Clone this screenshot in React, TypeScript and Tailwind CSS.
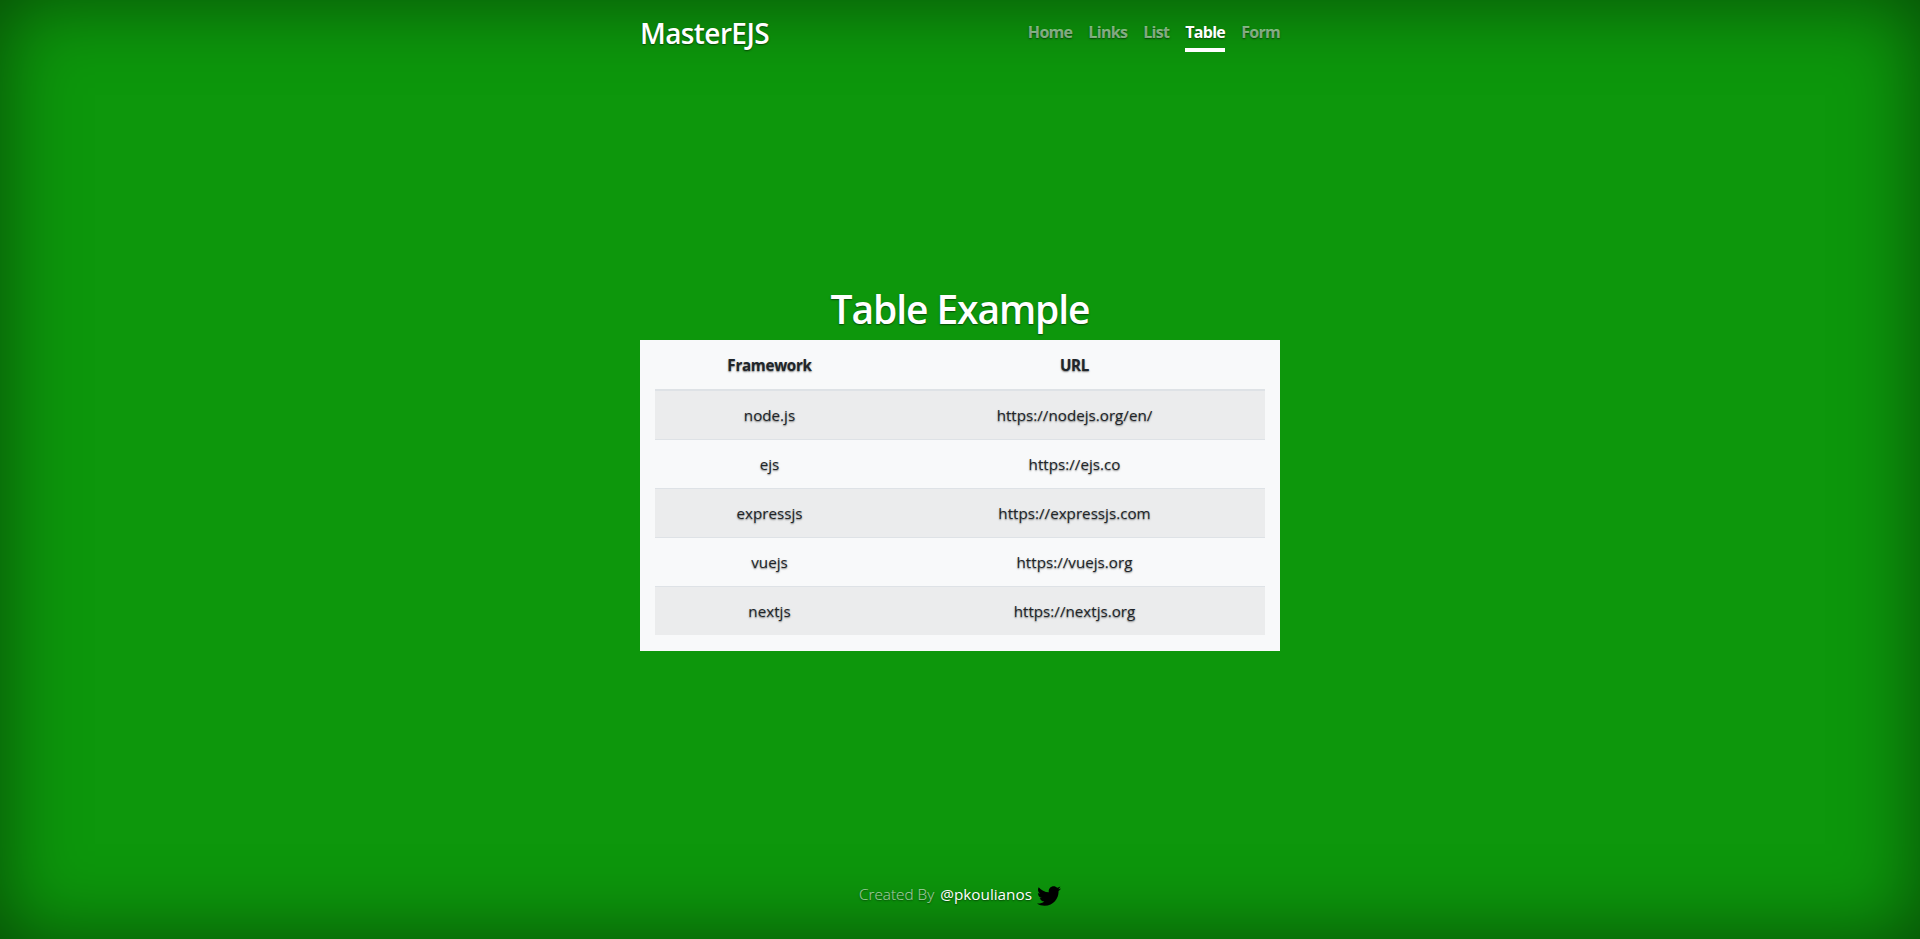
import { FaTwitter } from "react-icons/fa";

const rows = [
  ["node.js", "https://nodejs.org/en/"],
  ["ejs", "https://ejs.co"],
  ["expressjs", "https://expressjs.com"],
  ["vuejs", "https://vuejs.org"],
  ["nextjs", "https://nextjs.org"],
];

const navLink = "block py-1 border-b-4 font-bold ml-4 first:ml-0";

export default function App() {
  return (
    <div className="h-screen bg-[#0d970c] text-white text-center shadow-[inset_0_0_80px_rgba(0,0,0,0.5)] [text-shadow:0_0.8px_1.6px_rgba(0,0,0,0.5)] font-['Open_Sans','Noto_Sans',sans-serif] text-base leading-6">
      <div className="mx-auto flex h-full w-[672px] flex-col p-4">
        <header className="mb-auto flex items-start justify-between">
          <h3 className="text-[28px] leading-[34px] font-semibold tracking-[-0.6px]">MasterEJS</h3>
          <nav className="flex text-[16px] tracking-[-0.7px]">
            <a className={`${navLink} border-transparent text-white/50`}>Home</a>
            <a className={`${navLink} border-transparent text-white/50`}>Links</a>
            <a className={`${navLink} border-transparent text-white/50`}>List</a>
            <a className={`${navLink} border-white text-white`}>Table</a>
            <a className={`${navLink} border-transparent text-white/50`}>Form</a>
          </nav>
        </header>
        <main>
          <h1 className="mb-[6px] text-[39px] leading-[50px] font-semibold tracking-[-1.1px]">Table Example</h1>
          <div className="bg-[#f8f9fa] px-[15px] pb-4 text-[#212529] text-[15.2px] font-normal">
            <table className="w-full border-collapse">
              <thead>
                <tr>
                  <th className="w-[229px] border-t border-b-2 border-t-[#f8f9fa] border-b-[#dee2e6] p-3 align-bottom font-bold tracking-[-0.3px]">Framework</th>
                  <th className="border-t border-b-2 border-t-[#f8f9fa] border-b-[#dee2e6] p-3 align-bottom font-bold tracking-[-0.3px]">URL</th>
                </tr>
              </thead>
              <tbody>
                {rows.map(([a, b], i) => (
                  <tr key={a} className={i % 2 === 0 ? "bg-black/5" : ""}>
                    <td className={`${i === 0 ? "" : "border-t border-[#dee2e6]"} p-3`}>{a}</td>
                    <td className={`${i === 0 ? "" : "border-t border-[#dee2e6]"} p-3`}>{b}</td>
                  </tr>
                ))}
              </tbody>
            </table>
          </div>
        </main>
        <footer className="mt-auto flex justify-center pb-[15px] text-[15.3px] font-light">
          <span className="-mt-px text-white/65">Created By</span>
          <a className="-mt-px ml-[6px] font-normal text-white">@pkoulianos</a>
          <FaTwitter className="ml-[5px] mt-[1px] text-[24px] text-black" />
        </footer>
      </div>
    </div>
  );
}
